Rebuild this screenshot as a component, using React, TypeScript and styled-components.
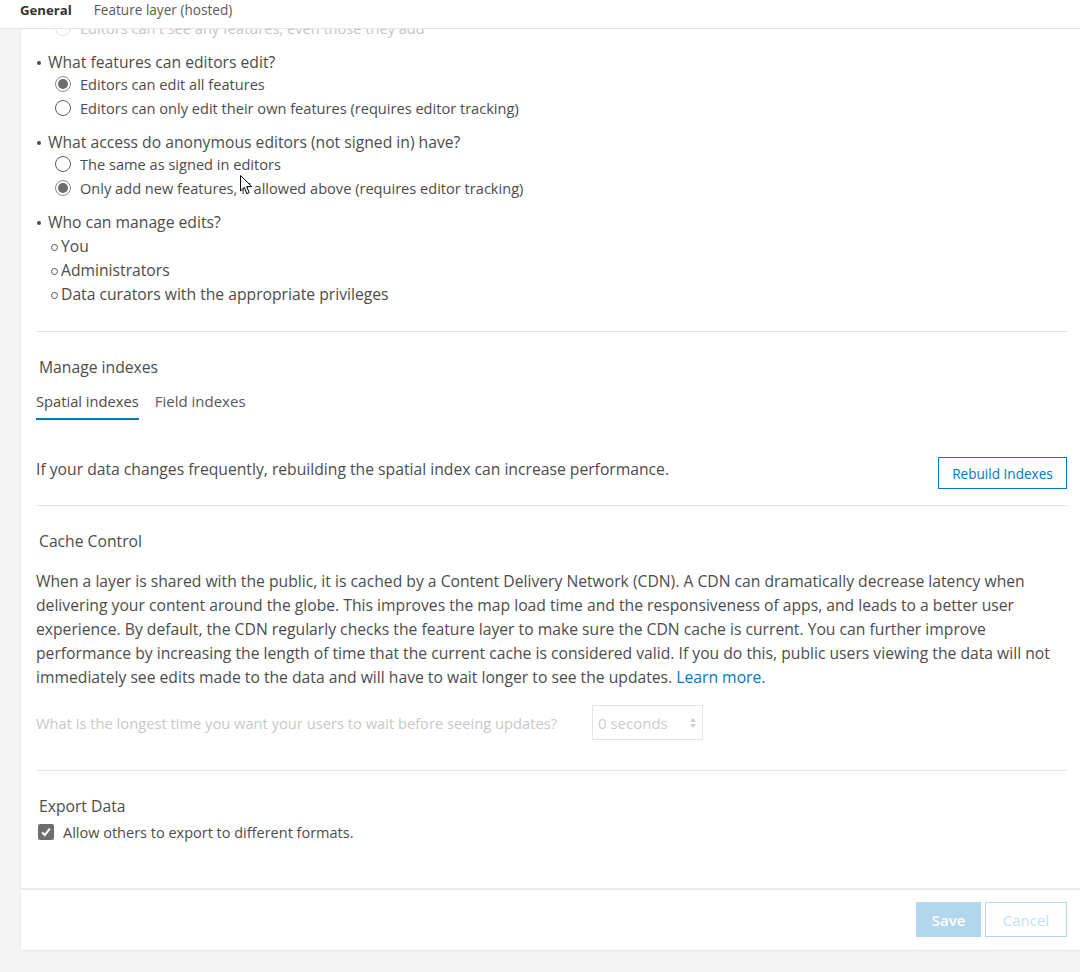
import React from "react";
import styled, { createGlobalStyle } from "styled-components";

const GlobalStyle = createGlobalStyle`
    html, body {
        margin: 0;
        padding: 0;
        background: #f3f3f3;
    }
    * {
        box-sizing: border-box;
    }
    body {
        font-family: "Open Sans", "Noto Sans", "Liberation Sans", sans-serif;
        color: #4c4c4c;
    }
`;

const Page = styled.div`
    height: 972px;
    display: flex;
    flex-direction: column;
    background: #f3f3f3;
`;

/* TOP BAR ---------------------------------------------------------------------------------- */
const TopBar = styled.div`
    height: 29px;
    background: #fff;
    border-bottom: 1px solid #e6e6e6;
    display: flex;
    align-items: flex-start;
    gap: 22px;
    padding: 1px 20px 0;
    position: relative;
    z-index: 2;
`;
const TopTab = styled.span<{ active?: boolean }>`
    font-size: ${props => (props.active ? 13.2 : 13.6)}px;
    line-height: 18px;
    font-weight: ${props => (props.active ? 700 : 400)};
    color: ${props => (props.active ? "#323232" : "#595959")};
`;

/* PANEL ---------------------------------------------------------------------------------- */
const Panel = styled.div`
    flex: 1;
    margin: 0 0 21px 20px;
    background: #fff;
    border-left: 1px solid #ececec;
    display: flex;
    flex-direction: column;
    min-height: 0;
`;
// the content is scrolled: its first row sits half under the top bar
const Scroll = styled.div`
    flex: 1;
    overflow: hidden;
    padding: 0 13px 0 15px;
`;

const Question = styled.div`
    margin-top: 12px;
    font-size: 15.7px;
    line-height: 20px;
    display: flex;
    align-items: center;
    &::before {
        content: "";
        width: 4px;
        height: 4px;
        border-radius: 50%;
        background: #4c4c4c;
        margin: 1px 7px 0 1px;
    }
`;

const RadioRow = styled.label<{ faded?: boolean }>`
    display: flex;
    align-items: center;
    gap: 9px;
    padding-left: 19px;
    height: 24px;
    font-size: 14.6px;
    color: ${props => (props.faded ? "#c4c4c4" : "#4c4c4c")};
    &.clipped {
        margin-top: -13px;
    }
`;
const Radio = styled.span<{ checked?: boolean; faded?: boolean }>`
    width: 16px;
    height: 16px;
    border-radius: 50%;
    flex: none;
    border: 1px solid ${props => (props.faded ? "#e0e0e0" : props.checked ? "#8a8a8a" : "#595959")};
    display: flex;
    align-items: center;
    justify-content: center;
    &::after {
        content: "";
        width: 10px;
        height: 10px;
        border-radius: 50%;
        background: ${props => (props.checked ? "#6e6e6e" : "transparent")};
    }
`;
const Covered = styled.span`
    position: relative;
`;

const SubList = styled.div`
    margin-top: 2px;
`;
const SubItem = styled.div`
    height: 24px;
    font-size: 15.7px;
    display: flex;
    align-items: center;
    padding-left: 15px;
    &::before {
        content: "";
        width: 5px;
        height: 5px;
        border-radius: 50%;
        border: 1px solid #5a5a5a;
        margin: 2px 3px 0 0;
    }
`;

const Divider = styled.hr<{ top: number }>`
    border: none;
    border-top: 1px solid #e6e6e6;
    margin: ${props => props.top}px 0 0;
`;

const SectionTitle = styled.div`
    margin-top: 25px;
    padding-left: 3px;
    font-size: 15.7px;
    line-height: 20px;
    color: #4c4c4c;
`;

/* TABS ---------------------------------------------------------------------------------- */
const Tabs = styled.div`
    display: flex;
    gap: 16px;
    margin-top: 14px;
`;
const Tab = styled.div<{ active?: boolean }>`
    font-size: ${props => (props.active ? 14.7 : 15)}px;
    line-height: 20px;
    padding-bottom: 7px;
    border-bottom: 2px solid ${props => (props.active ? "#0079c1" : "transparent")};
    color: ${props => (props.active ? "#4c4c4c" : "#595959")};
`;

const IndexRow = styled.div`
    margin-top: 37px;
    display: flex;
    justify-content: space-between;
    align-items: flex-start;
`;
const Text = styled.p`
    margin: 0;
    padding-top: 2px;
    font-size: 15.7px;
    line-height: 20px;
`;
const OutlineButton = styled.button`
    height: 32px;
    width: 129px;
    padding: 0;
    background: #fff;
    border: 1px solid #0079c1;
    color: #0079c1;
    font-family: inherit;
    font-size: 13.6px;
`;

const Paragraph = styled.p`
    margin: 18px 0 0;
    font-size: 15.7px;
    line-height: 24px;
    white-space: nowrap;
    a {
        color: #0079c1;
        text-decoration: none;
    }
`;

const WaitRow = styled.div`
    margin-top: 16px;
    display: flex;
    align-items: center;
    gap: 35px;
    color: #c8c8c8;
    font-size: 14.7px;
`;
const SelectBox = styled.div`
    width: 111px;
    height: 35px;
    border: 1px solid #e6e6e6;
    display: flex;
    align-items: center;
    justify-content: space-between;
    padding: 0 5px;
    font-size: 15px;
    color: #cccccc;
`;

const CheckRow = styled.label`
    margin-top: 6px;
    display: flex;
    align-items: center;
    gap: 9px;
    padding-left: 2px;
    height: 20px;
    font-size: 14.5px;
`;
const CheckBox = styled.span`
    width: 16px;
    height: 16px;
    border-radius: 2px;
    background: #6e6e6e;
    display: flex;
    align-items: center;
    justify-content: center;
`;

/* FOOTER ---------------------------------------------------------------------------------- */
const Footer = styled.div`
    height: 63px;
    border-top: 2px solid #ebebeb;
    border-bottom: 1px solid #ebebeb;
    display: flex;
    justify-content: flex-end;
    align-items: flex-start;
    gap: 4px;
    padding: 12px 13px 0 0;
`;
const FooterButton = styled.button<{ primary?: boolean }>`
    height: 35px;
    width: ${props => (props.primary ? 65 : 82)}px;
    font-family: inherit;
    font-size: 15px;
    font-weight: ${props => (props.primary ? 600 : 400)};
    background: ${props => (props.primary ? "#b2d6ec" : "#fff")};
    color: ${props => (props.primary ? "#ffffff" : "#c3dff0")};
    border: 1px solid #b2d6ec;
`;

// mouse pointer lying over the text
const Cursor = styled.svg`
    position: absolute;
    left: -1px;
    top: -3px;
`;

const App = () => {
    return (
        <Page>
            <GlobalStyle />
            <TopBar>
                <TopTab active>General</TopTab>
                <TopTab>Feature layer (hosted)</TopTab>
            </TopBar>
            <Panel>
                <Scroll>
                    <RadioRow faded className="clipped">
                        <Radio faded />
                        Editors can't see any features, even those they add
                    </RadioRow>

                    <Question>What features can editors edit?</Question>
                    <RadioRow>
                        <Radio checked />
                        Editors can edit all features
                    </RadioRow>
                    <RadioRow>
                        <Radio />
                        Editors can only edit their own features (requires editor tracking)
                    </RadioRow>

                    <Question>What access do anonymous editors (not signed in) have?</Question>
                    <RadioRow>
                        <Radio />
                        The same as signed in editors
                    </RadioRow>
                    <RadioRow>
                        <Radio checked />
                        <span>
                            Only add new features,{" "}
                            <Covered>
                                if
                                <Cursor width="13" height="20" viewBox="0 0 13 20">
                                    <path d="M0.5 0.5 L0.5 16 L4.3 12.4 L6.8 18.6 L9.2 17.6 L6.7 11.6 L11.8 11.6 Z" fill="#fff" stroke="#000" strokeWidth="1" strokeLinejoin="round" />
                                </Cursor>
                            </Covered>{" "}
                            allowed above (requires editor tracking)
                        </span>
                    </RadioRow>

                    <Question>Who can manage edits?</Question>
                    <SubList>
                        <SubItem>You</SubItem>
                        <SubItem>Administrators</SubItem>
                        <SubItem>Data curators with the appropriate privileges</SubItem>
                    </SubList>

                    <Divider top={25} />

                    <SectionTitle>Manage indexes</SectionTitle>
                    <Tabs>
                        <Tab active>Spatial indexes</Tab>
                        <Tab>Field indexes</Tab>
                    </Tabs>
                    <IndexRow>
                        <Text>If your data changes frequently, rebuilding the spatial index can increase performance.</Text>
                        <OutlineButton>Rebuild Indexes</OutlineButton>
                    </IndexRow>

                    <Divider top={16} />

                    <SectionTitle>Cache Control</SectionTitle>
                    <Paragraph>
                        When a layer is shared with the public, it is cached by a Content Delivery Network (CDN). A CDN can dramatically decrease latency when
                        <br />
                        delivering your content around the globe. This improves the map load time and the responsiveness of apps, and leads to a better user
                        <br />
                        experience. By default, the CDN regularly checks the feature layer to make sure the CDN cache is current. You can further improve
                        <br />
                        performance by increasing the length of time that the current cache is considered valid. If you do this, public users viewing the data will not
                        <br />
                        immediately see edits made to the data and will have to wait longer to see the updates. <a href="#">Learn more.</a>
                    </Paragraph>
                    <WaitRow>
                        <span>What is the longest time you want your users to wait before seeing updates?</span>
                        <SelectBox>
                            0 seconds
                            <svg width="8" height="12" viewBox="0 0 8 12">
                                <path d="M4 1 L7 5 L1 5 Z M4 11 L7 7 L1 7 Z" fill="#cfcfcf" />
                            </svg>
                        </SelectBox>
                    </WaitRow>

                    <Divider top={30} />

                    <SectionTitle>Export Data</SectionTitle>
                    <CheckRow>
                        <CheckBox>
                            <svg width="12" height="12" viewBox="0 0 12 12">
                                <path d="M2.2 6.4 L4.8 9.2 L9.8 2.6" fill="none" stroke="#fff" strokeWidth="2" />
                            </svg>
                        </CheckBox>
                        Allow others to export to different formats.
                    </CheckRow>
                </Scroll>
                <Footer>
                    <FooterButton primary>Save</FooterButton>
                    <FooterButton>Cancel</FooterButton>
                </Footer>
            </Panel>
        </Page>
    );
};

export default App;
